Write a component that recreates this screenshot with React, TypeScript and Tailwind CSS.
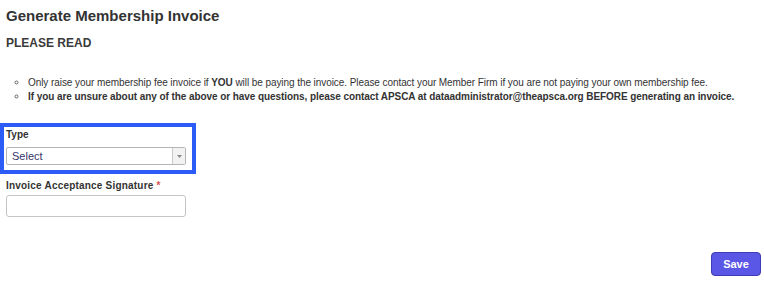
import React from 'react';

const font = { fontFamily: '"Liberation Sans", Arial, sans-serif' };

export default function App() {
  return (
    <div className="w-[764px] h-[281px] bg-white text-[#333] px-[6px] overflow-hidden" style={font}>
      <h1 className="pt-[7px] text-[15px] leading-[18px] font-bold">Generate Membership Invoice</h1>
      <h2 className="mt-[11px] text-[12px] leading-[14px] font-bold text-[#3a3a3a]">PLEASE READ</h2>

      <ul className="mt-[26px] pl-[22px] text-[10px] leading-[14px] tracking-[-0.07px] list-[circle] marker:text-[#666] whitespace-nowrap">
        <li>
          Only raise your membership fee invoice if <b>YOU</b> will be paying the invoice. Please contact your Member
          Firm if you are not paying your own membership fee.
        </li>
        <li className="font-bold">
          If you are unsure about any of the above or have questions, please contact APSCA at
          dataadministrator@theapsca.org BEFORE generating an invoice.
        </li>
      </ul>

      <div className="mt-[19px] -ml-[6px] w-[196px] border-4 border-[#2d5bf6] pl-[2px] pr-[6px] pt-[2px] pb-[5px]">
        <label className="block text-[10px] leading-[12px] font-bold">Type</label>
        <div className="mt-[6px] flex h-[18px] border border-[#b5b5b5] rounded-[2px] bg-white">
          <span className="flex-1 pl-[5px] text-[11px] leading-[16px] text-[#35356b]">Select</span>
          <span className="w-[13px] flex items-center justify-center border-l border-[#c8c8c8] bg-[#f2f2f2]">
            <svg width="5" height="3" viewBox="0 0 5 3">
              <path d="M0 0H5L2.5 3Z" fill="#888" />
            </svg>
          </span>
        </div>
      </div>

      <label className="mt-[6px] block text-[10px] leading-[12px] font-bold tracking-[0.2px]">
        Invoice Acceptance Signature <span className="text-[#d9534f]">*</span>
      </label>
      <input className="mt-[3px] block w-[180px] h-[22px] border border-[#c4c4c4] rounded-[3px] outline-none" />

      <div className="mt-[35px] flex justify-end -mr-[3px]">
        <button className="w-[50px] h-[24px] rounded-[4px] bg-[#5b57e6] border border-[#3f3bb5] text-white text-[11px] font-bold">
          Save
        </button>
      </div>
    </div>
  );
}
